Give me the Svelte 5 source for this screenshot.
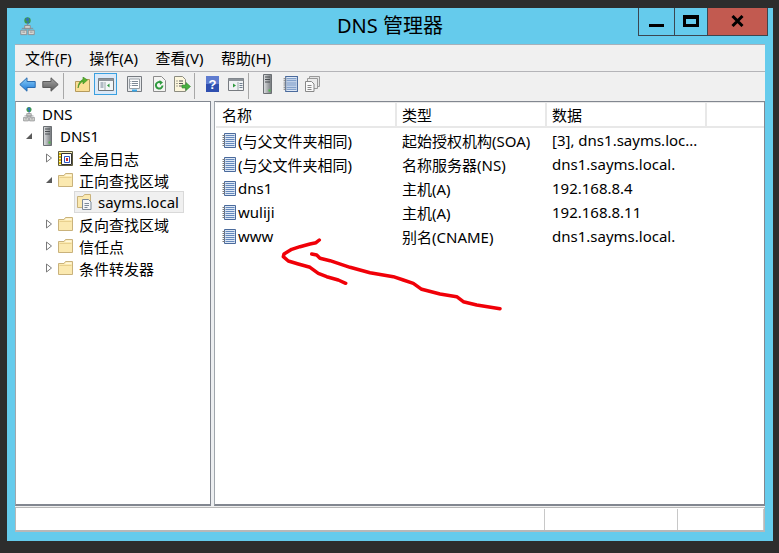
<script>
  const menus = ['文件(F)', '操作(A)', '查看(V)', '帮助(H)'];
  const zones = [
    { label: '全局日志', arrow: 'closed', icon: 'log' },
    { label: '正向查找区域', arrow: 'open', icon: 'folder' },
    { label: 'sayms.local', arrow: 'none', icon: 'zone', sel: true },
    { label: '反向查找区域', arrow: 'closed', icon: 'folder' },
    { label: '信任点', arrow: 'closed', icon: 'folder' },
    { label: '条件转发器', arrow: 'closed', icon: 'folder' }
  ];
  const records = [
    ['(与父文件夹相同)', '起始授权机构(SOA)', '[3], dns1.sayms.loc...'],
    ['(与父文件夹相同)', '名称服务器(NS)', 'dns1.sayms.local.'],
    ['dns1', '主机(A)', '192.168.8.4'],
    ['wuliji', '主机(A)', '192.168.8.11'],
    ['www', '别名(CNAME)', 'dns1.sayms.local.']
  ];
</script>

{#snippet dnsIcon(w, h)}
  <svg width={w} height={h} viewBox="0 0 16 20">
    <circle cx="8" cy="4" r="3.4" fill="#3f9a4a" />
    <path d="M6 2.500 8 1l2 1.500-1 2-2 .5zM8 5l2 .5-1 2H7.500z" fill="#2f6fc0" />
    <path d="M7.200 7.500h1.600v4H7.200z" fill="#8a8f96" />
    <path d="M5 9.500h6v3.600H5z" fill="#d4d4d0" stroke="#8b8d90" />
    <path d="M.8 14.500h6.400v4.700H.8zM8.800 14.500h6.400v4.700H8.800z" fill="#d8d8d4" stroke="#8b8d90" />
    <path d="M2.500 16.500h3M10.500 16.500h3M2 12.500h12" stroke="#8b8d90" fill="none" />
  </svg>
{/snippet}

{#snippet serverIcon()}
  <svg width="9" height="20" viewBox="0 0 9 20">
    <defs><linearGradient id="srv" x1="0" x2="1" y1="0" y2="0"><stop offset="0" stop-color="#e0e2e4"/><stop offset="1" stop-color="#73777b"/></linearGradient></defs>
    <path d="M.5.500h8v19h-8z" fill="url(#srv)" stroke="#6b6f73" />
    <path d="M2 3h5M2 5.500h5M2 8h5" stroke="#4a4e52" />
    <path d="M5.500 15.500h2v2h-2z" fill="#4fc04a" />
  </svg>
{/snippet}

{#snippet folderIcon()}
  <svg width="15" height="14" viewBox="0 0 15 14">
    <path d="M.5 2.500V13.500h14V.5H7.500L6 2.500z" fill="#fbe9b0" stroke="#c9b27c" />
    <path d="M1.500 4.500h12" stroke="#e8d08e" />
    <path d="M8 1.500h5.500V3H7z" fill="#fff8dc" />
  </svg>
{/snippet}

{#snippet zoneIcon()}
  <svg width="15" height="16" viewBox="0 0 15 16">
    <path d="M.5 2.500V13.500h13V.5H7.500L6 2.500z" fill="#fbe9b0" stroke="#c9b27c" />
    <path d="M5.500 5.500h6l2.500 2.500v7.500h-8.500z" fill="#f4f6f8" stroke="#7d8a99" />
    <path d="M7.500 9.500h4.500M7.500 11.500h4.500M7.500 13.500h3" stroke="#7d8a99" />
  </svg>
{/snippet}

{#snippet logIcon()}
  <svg width="15" height="15" viewBox="0 0 15 15">
    <path d="M.5.500h14v14H.5z" fill="#f5eeb8" stroke="#5e5a3c" />
    <path d="M3.500 2.500h10v11h-10z" fill="#fff" stroke="#333" />
    <path d="M2 2v11" stroke="#d6b300" stroke-width="2" stroke-dasharray="2 1" />
    <path d="M6.500 5.500h5v6h-5z" fill="none" stroke="#2b57c4" />
    <path d="M8 7h2v3H8z" fill="#d42b2b" />
  </svg>
{/snippet}

{#snippet recordIcon(w = 14, h = 15)}
  <svg width={w} height={h} viewBox="0 0 14 15">
    <path d="M2.500.5h11v14h-11z" fill="#dfe9f6" stroke="#4a6a9c" />
    <path d="M3.500 2.500h9M3.500 4.500h9M3.500 6.500h9M3.500 8.500h9M3.500 10.500h9M3.500 12.500h9" stroke="#6488bc" />
    <path d="M.5 2.500h2.500M.5 4.500h2.500M.5 6.500h2.500M.5 8.500h2.500M.5 10.500h2.500M.5 12.500h2.500" stroke="#7a7a7a" />
  </svg>
{/snippet}

{#snippet chevron(kind)}
  {#if kind === 'open'}
    <svg class="arrow" width="8" height="8" viewBox="0 0 8 8"><path d="M1 7h6V1z" fill="#5a5a5a" /></svg>
  {:else if kind === 'closed'}
    <svg class="arrow" width="8" height="10" viewBox="0 0 8 10"><path d="M1.500 1 6.500 5l-5 4z" fill="#fff" stroke="#7a7a7a" /></svg>
  {:else}
    <span class="arrow"></span>
  {/if}
{/snippet}

<div class="window">
  <header class="titlebar">
    <span class="app-icon">{@render dnsIcon(15, 20)}</span>
    <h1>DNS 管理器</h1>
    <div class="controls">
      <span class="ctl min"><i></i></span>
      <span class="ctl max"><i></i></span>
      <span class="ctl close">
        <svg width="13" height="12" viewBox="0 0 13 12"><path d="M1.500 1 11.500 11M11.500 1 1.500 11" stroke="#000" stroke-width="3" /></svg>
      </span>
    </div>
  </header>

  <div class="client">
    <nav class="menubar">
      {#each menus as m}<span>{m}</span>{/each}
    </nav>

    <div class="toolbar">
      <span class="tb">
        <svg width="17" height="15" viewBox="0 0 17 15"><defs><linearGradient id="bk" x1="0" x2="0" y1="0" y2="1"><stop offset="0" stop-color="#8fd0f8"/><stop offset="1" stop-color="#1a78d8"/></linearGradient></defs><path d="M.8 7.500 8 .8v3.700h8.200v6H8v3.700z" fill="url(#bk)" stroke="#2a6cb0" /></svg>
      </span>
      <span class="tb">
        <svg width="17" height="15" viewBox="0 0 17 15"><defs><linearGradient id="fw" x1="0" x2="0" y1="0" y2="1"><stop offset="0" stop-color="#a8a8a8"/><stop offset="1" stop-color="#585858"/></linearGradient></defs><path d="M16.200 7.500 9 .8v3.700H.8v6H9v3.700z" fill="url(#fw)" stroke="#5a5a5a" /></svg>
      </span>
      <span class="sep"></span>
      <span class="tb up">
        <svg width="15" height="15" viewBox="0 0 15 15"><path d="M.5 4.500V14.500h14V2.500H8L7 4.500z" fill="#fbdf96" stroke="#b59a5c" /><path d="M3 11c1-4 3-6 5-6.500V7l4.500-4L8 0v2.500C5 3.500 3 7 3 11z" fill="#58b030" stroke="#3d8a20" stroke-width=".6" /></svg>
      </span>
      <span class="tb active">
        <svg width="16" height="13" viewBox="0 0 16 13"><path d="M.5.500h15v12H.5z" fill="#f4f6f8" stroke="#6f7478" /><path d="M.5.500h15v2.500H.5z" fill="#8d9399" /><path d="M2.500 5h3M2.500 7h3M2.500 9h3" stroke="#6f7f90" /><path d="M7 4v8" stroke="#9aa" /><path d="M11.500 5.500v4L9 7.500z" fill="#2f9a3f" /></svg>
      </span>
      <span class="tb g3">
        <svg width="15" height="16" viewBox="0 0 15 16"><path d="M.5.500h14v15H.5z" fill="#e8eaec" stroke="#777b80" /><path d="M2.500 3h10v9.500h-10z" fill="#fff" stroke="#9aa0a6" /><path d="M5 5.500h6M5 7.500h6M5 9.500h6M3.500 5.500h.8M3.500 7.500h.8M3.500 9.500h.8" stroke="#7f8a96" /><path d="M5 13.500h5v2H5z" fill="#38a8e8" /></svg>
      </span>
      <span class="tb g3b">
        <svg width="13" height="16" viewBox="0 0 13 16"><path d="M.5.500h8l4 4v11H.5z" fill="#f4f4f2" stroke="#8c8c8c" /><path d="M9.500 9.500A3.300 3.300 0 1 1 8 6.500" fill="none" stroke="#2f9a3f" stroke-width="2" /><path d="M6.500 4 10 6.500 7 9z" fill="#2f9a3f" /></svg>
      </span>
      <span class="tb">
        <svg width="17" height="16" viewBox="0 0 17 16"><path d="M.5.500h8l3 3v12H.5z" fill="#fcf6dc" stroke="#8c8c80" /><path d="M2.500 5h1M2.500 7.500h1M2.500 10h1M5 5h4M5 7.500h4M5 10h3" stroke="#555" /><path d="M8 9h4V6.500l4.500 4-4.500 4V12H8z" fill="#48b040" stroke="#358a30" stroke-width=".6" /></svg>
      </span>
      <span class="sep tight"></span>
      <span class="tb help">
        <svg width="13" height="16" viewBox="0 0 13 16"><path d="M0 0h13v16H0z" fill="#2f4fb0" /><path d="M0 0h13v8H0z" fill="#5f7cd0" /><text x="6.500" y="13" font-size="13" font-weight="700" text-anchor="middle" fill="#fff" font-family="Liberation Sans, sans-serif">?</text></svg>
      </span>
      <span class="tb">
        <svg width="16" height="13" viewBox="0 0 16 13"><path d="M.5.500h15v12H.5z" fill="#f0f2f4" stroke="#777b80" /><path d="M.5.500h15v2.500H.5z" fill="#8d9399" /><path d="M10 4v8" stroke="#9aa" /><path d="M11.500 5.500h3M11.500 7.500h3M11.500 9.500h3" stroke="#6f7f90" /><path d="M5 5.500v4l3-2z" fill="#2f9a3f" /></svg>
      </span>
      <span class="sep"></span>
      <span class="tb up">{@render serverIcon()}</span>
      <span class="tb">{@render recordIcon(15, 16)}</span>
      <span class="tb last">
        <svg width="15" height="16" viewBox="0 0 15 16"><path d="M4.500.500h10v10h-10z" fill="#e4e4e4" stroke="#999" /><path d="M2.500 2.500h10v10h-10z" fill="#ececec" stroke="#999" /><path d="M.5 5.500h6l2.500 2.500v7.500H.5z" fill="#fafafa" stroke="#888" /><path d="M2.500 9.500h4M2.500 11.500h4M2.500 13.500h4" stroke="#888" /></svg>
      </span>
    </div>

    <div class="panes">
      <aside class="tree">
        <div class="node root">
          <span class="ic-dns">{@render dnsIcon(12, 16)}</span>
          <span class="t">DNS</span>
        </div>
        <div class="node server">
          {@render chevron('open')}
          <span class="ic-srv">{@render serverIcon()}</span>
          <span class="t">DNS1</span>
        </div>
        {#each zones as z}
          <div class="node" class:child={z.sel} class:level={!z.sel}>
            {#if z.sel}
              <span class="selbox">
                {@render zoneIcon()}
                <span class="t">{z.label}</span>
              </span>
            {:else}
              {@render chevron(z.arrow)}
              {#if z.icon === 'log'}{@render logIcon()}{:else}{@render folderIcon()}{/if}
              <span class="t">{z.label}</span>
            {/if}
          </div>
        {/each}
      </aside>

      <div class="divider"></div>

      <section class="list">
        <div class="head">
          <span class="c1">名称</span><span class="c2">类型</span><span class="c3">数据</span><span class="fill"></span>
        </div>
        {#each records as r}
          <div class="row">
            <span class="c1 name">{@render recordIcon()}<b>{r[0]}</b></span>
            <span class="c2">{r[1]}</span>
            <span class="c3">{r[2]}</span>
          </div>
        {/each}
      </section>
    </div>

    <footer class="status">
      <span class="s1"></span><span class="s2"></span><span class="s3"></span>
    </footer>
  </div>

  <svg class="ink" width="779" height="553" viewBox="0 0 779 553" aria-hidden="true">
    <path d="M319.300 240 316 242.700 310 244 300 246.700 291.700 249.300 284 254 283.300 256.700 288.300 261 298.300 264 310 267.300 318.300 273.300 326.700 276.700 338.300 280 345.700 283.300" />
    <path d="M311.700 254 316.700 255 320 258.300 330 260.700 350 267.300 370 272.700 393.300 276.700 403.300 280 413.300 283.300 421.700 289.300 440 294 456.700 296.700 463.300 301.700 476.700 305 500 308.700" />
  </svg>
</div>

<style>
  :global(body) {
    margin: 0;
    background: #2d2d2d;
    height: 553px;
    overflow: hidden;
  }
  .window {
    box-sizing: border-box;
    position: absolute;
    left: 7px;
    top: 8px;
    width: 766px;
    height: 533px;
    background: #65cbec;
    padding: 36px 8px 9px 8px;
    display: flex;
    flex-direction: column;
    font-family: "Noto Sans", "Noto Sans CJK SC", sans-serif;
    font-size: 15px;
    color: #000;
  }
  .titlebar {
    position: absolute;
    left: 0;
    right: 0;
    top: 0;
    height: 36px;
  }
  .app-icon {
    position: absolute;
    left: 13px;
    top: 8px;
    display: block;
  }
  h1 {
    margin: 0;
    text-align: center;
    font-weight: 400;
    font-size: 20px;
    line-height: 36px;
  }
  .controls {
    position: absolute;
    left: 631px;
    top: 0;
    display: flex;
    height: 27px;
    border: 1px solid #3b4650;
    border-top: 0;
  }
  .ctl {
    display: flex;
    align-items: center;
    justify-content: center;
    box-sizing: border-box;
    height: 27px;
  }
  .min { width: 36px; border-right: 1px solid #3b4650; }
  .min i { display: block; width: 15px; height: 3px; background: #000; margin-top: 8px; }
  .max { width: 33px; border-right: 1px solid #3b4650; }
  .max i { display: block; box-sizing: border-box; width: 16px; height: 12px; border: 3px solid #000; border-top-width: 4px; margin-bottom: 1px; }
  .close { width: 59px; background: #c25a50; }
  .close svg { margin-bottom: 1px; }

  .client {
    flex: 1;
    display: flex;
    flex-direction: column;
    background: #f0f0f0;
    min-height: 0;
  }
  .menubar {
    box-sizing: border-box;
    height: 28px;
    display: flex;
    align-items: center;
    gap: 17.5px;
    padding: 0 0 0 10px;
    border-top: 1px solid #a6b1bb;
    border-bottom: 1px solid #b4b4b8;
    line-height: 26px;
    white-space: nowrap;
  }
  .toolbar {
    box-sizing: border-box;
    height: 29px;
    display: flex;
    align-items: flex-start;
    padding: 1px 0 0 1px;
  }
  .tb {
    width: 23px;
    height: 22px;
    box-sizing: border-box;
    display: flex;
    align-items: center;
    justify-content: center;
    flex: none;
  }
  .sep {
    width: 1px;
    height: 26px;
    background: #a8a8a8;
    flex: none;
    margin: 0 0 0 1px;
  }
  .sep.tight { margin-left: 0; }
  .up { margin-left: 7px; }
  .help { margin-left: 6px; }
  .g3 { margin-left: 6px; }
  .g3b { margin-left: 2px; }
  .last { margin-left: -1px; }
  .active {
    background: #dbe9f8;
    border: 1px solid #3aa0e0;
  }
  .panes {
    flex: 1;
    min-height: 0;
    display: flex;
  }
  .tree {
    box-sizing: border-box;
    width: 196px;
    background: #fff;
    border: 1px solid #828790;
    border-bottom-width: 2px;
    border-left-color: #a0a6ac;
    padding-top: 1px;
  }
  .divider { width: 3px; background: #eceef0; }
  .node {
    height: 22px;
    display: flex;
    align-items: center;
    white-space: nowrap;
  }
  .root { padding-left: 7px; }
  .ic-dns { display: flex; margin-right: 7px; }
  .server { padding-left: 9px; }
  .ic-srv { display: flex; margin: 0 8px 0 4px; }
  .arrow {
    display: block;
    width: 8px;
    flex: none;
    margin-right: 6px;
  }
  .level { padding-left: 29px; }
  .level :global(.arrow) { margin-right: 5px; }
  .level .t { margin-left: 6px; }
  .child { padding-left: 58px; }
  .selbox {
    box-sizing: border-box;
    display: flex;
    align-items: center;
    height: 22px;
    width: 110px;
    padding-left: 2px;
    gap: 6px;
    background: #f0f0f0;
    border: 1px solid #d9d9d9;
  }
  .list {
    flex: 1;
    min-width: 0;
    box-sizing: border-box;
    background: #fff;
    border: 1px solid #828790;
    border-bottom-width: 2px;
    border-left-color: #a0a6ac;
    padding-left: 1px;
  }
  .head {
    height: 23px;
    display: flex;
    align-items: center;
    border: 1px solid #e8e8e8;
    border-width: 1px 0 2px 0;
    box-sizing: content-box;
  }
  .head span {
    box-sizing: border-box;
    height: 100%;
    display: flex;
    align-items: center;
    border-right: 2px solid #e8e8e8;
  }
  .head .fill { border: 0; }
  .c1 { box-sizing: border-box; width: 181px; padding-left: 6px; flex: none; }
  .c2 { box-sizing: border-box; width: 150px; padding-left: 5px; flex: none; }
  .c3 { box-sizing: border-box; width: 160px; padding-left: 5px; flex: none; }
  .row {
    height: 24px;
    display: flex;
    align-items: center;
    white-space: nowrap;
  }
  .name { display: flex; align-items: center; gap: 2px; }
  .name b { font-weight: 400; }
  .status {
    box-sizing: border-box;
    height: 25px;
    margin-top: 1px;
    background: #fff;
    border: 1px solid #b8b8b8;
    border-width: 1px 1px 2px 1px;
    display: flex;
    padding-top: 1px;
  }
  .status span { box-sizing: border-box; border-right: 1px solid #c8c8c8; }
  .s1 { width: 529px; }
  .s2 { width: 133px; }
  .s3 { width: 86px; }
  .ink {
    position: absolute;
    left: -7px;
    top: -8px;
    pointer-events: none;
  }
  .ink path {
    fill: none;
    stroke: #f00008;
    stroke-width: 3.5;
    stroke-linecap: round;
    stroke-linejoin: round;
  }
</style>
